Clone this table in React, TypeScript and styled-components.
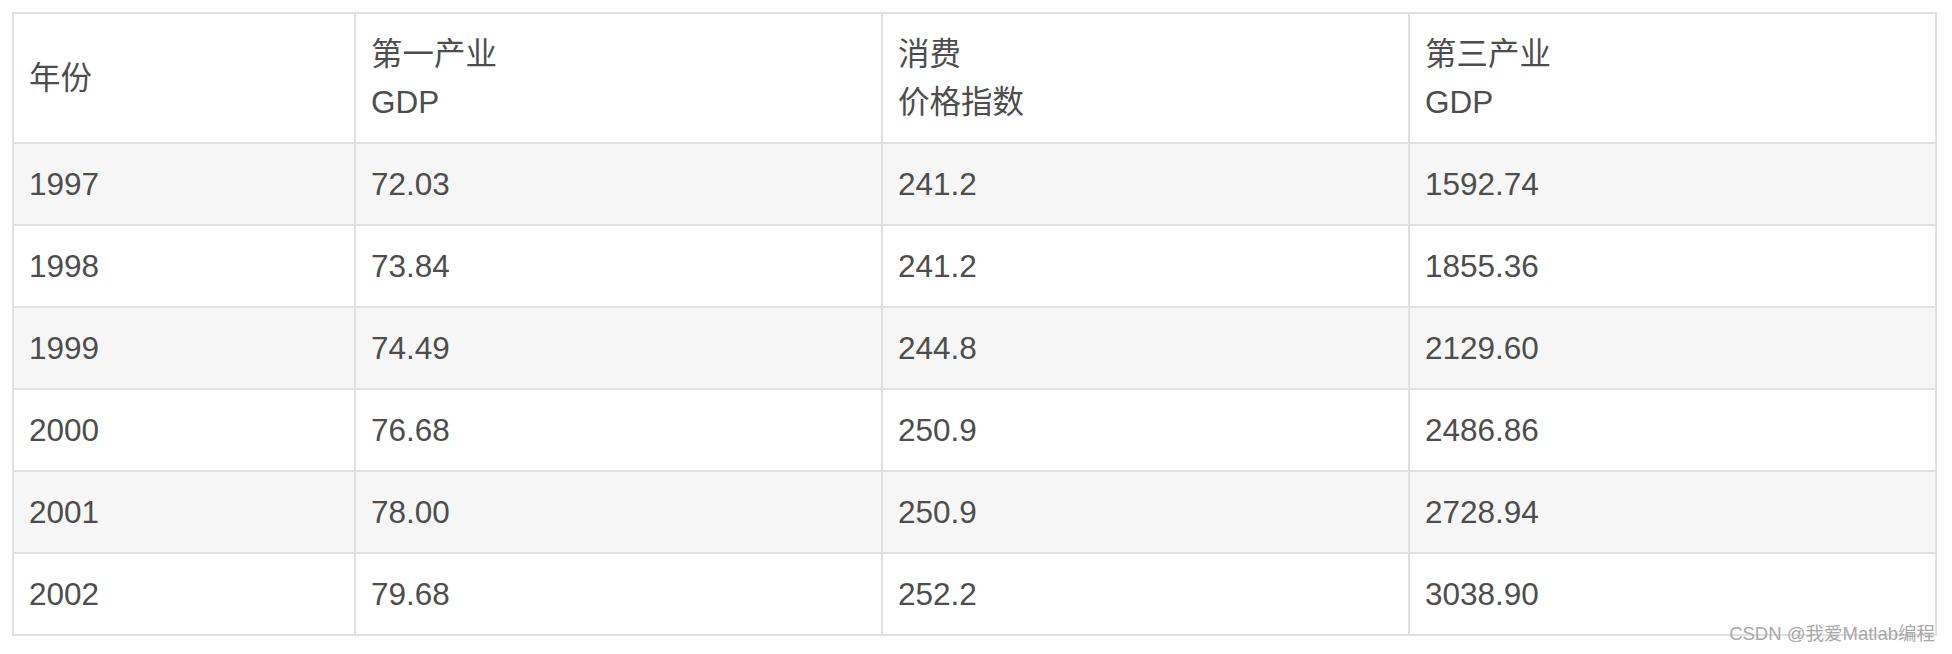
import React from "react";
import styled, { createGlobalStyle } from "styled-components";

const rows = [
    ["1997", "72.03", "241.2", "1592.74"],
    ["1998", "73.84", "241.2", "1855.36"],
    ["1999", "74.49", "244.8", "2129.60"],
    ["2000", "76.68", "250.9", "2486.86"],
    ["2001", "78.00", "250.9", "2728.94"],
    ["2002", "79.68", "252.2", "3038.90"],
];

const colWidths = [342, 527, 527, 527];

const App = () => {
    return (
        <>
            <GlobalStyle />
            <Wrapper>
                <Table>
                    <colgroup>
                        {colWidths.map((w, i) => (
                            <col key={i} style={{ width: w }} />
                        ))}
                    </colgroup>
                    <thead>
                        <tr>
                            <Th>年份</Th>
                            <Th>第一产业<br />GDP</Th>
                            <Th>消费<br />价格指数</Th>
                            <Th>第三产业<br />GDP</Th>
                        </tr>
                    </thead>
                    <tbody>
                        {rows.map((row, i) => (
                            <Row key={row[0]} $striped={i % 2 === 0}>
                                {row.map((cell, j) => (
                                    <Td key={j}>{cell}</Td>
                                ))}
                            </Row>
                        ))}
                    </tbody>
                </Table>
                <Watermark>CSDN @我爱Matlab编程</Watermark>
            </Wrapper>
        </>
    );
};

const GlobalStyle = createGlobalStyle`
    body {
        margin: 0;
        background: #ffffff;
    }
`;

const Wrapper = styled.div`
    position: relative;
    width: 1952px;
    height: 654px;
    box-sizing: border-box;
    padding: 12px 17px 0 12px;
    font-family: "Liberation Sans", "Noto Sans CJK SC", Arial, sans-serif;
    color: #4d4d4d;
`;

const Table = styled.table`
    width: 1923px;
    table-layout: fixed;
    border-collapse: collapse;
    border: 2px solid #e0e0e0;
`;

const Th = styled.th`
    font-weight: normal;
    text-align: left;
    vertical-align: middle;
    font-size: 31.5px;
    line-height: 48px;
    padding: 16px 15px;
    border: 2px solid #e0e0e0;
    background: #ffffff;
`;

const Row = styled.tr<{ $striped: boolean }>`
    background: ${(p) => (p.$striped ? "#f6f6f6" : "#ffffff")};
`;

const Td = styled.td`
    font-size: 31.5px;
    line-height: 48px;
    padding: 16px 15px;
    border: 2px solid #e0e0e0;
    vertical-align: middle;
`;

const Watermark = styled.div`
    position: absolute;
    right: 17px;
    top: 622px;
    font-size: 18.5px;
    line-height: 24px;
    color: #a8a8a8;
    white-space: nowrap;
`;

export default App;
